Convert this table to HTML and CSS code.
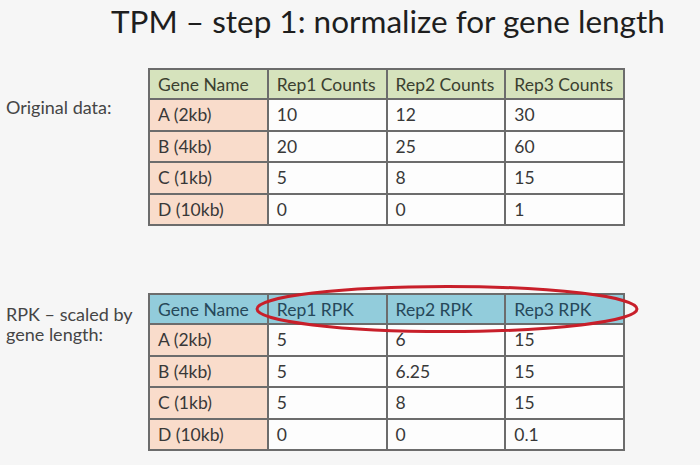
FILE: index.html
```html
<!DOCTYPE html>
<html>
<head>
<meta charset="utf-8">
<link rel="stylesheet" href="styles.css">
</head>
<body>
<div class="slide">
  <h1 class="title">TPM – step 1: normalize for gene length</h1>

  <section class="section first">
    <div class="label">Original data:</div>
    <div class="table-wrap">
      <table class="data green">
        <thead>
          <tr><th>Gene Name</th><th>Rep1 Counts</th><th>Rep2 Counts</th><th>Rep3 Counts</th></tr>
        </thead>
        <tbody>
          <tr><td>A (2kb)</td><td>10</td><td>12</td><td>30</td></tr>
          <tr><td>B (4kb)</td><td>20</td><td>25</td><td>60</td></tr>
          <tr><td>C (1kb)</td><td>5</td><td>8</td><td>15</td></tr>
          <tr><td>D (10kb)</td><td>0</td><td>0</td><td>1</td></tr>
        </tbody>
      </table>
    </div>
  </section>

  <section class="section second">
    <div class="label">RPK – scaled by<br>gene length:</div>
    <div class="table-wrap">
      <table class="data blue">
        <thead>
          <tr><th>Gene Name</th><th>Rep1 RPK</th><th>Rep2 RPK</th><th>Rep3 RPK</th></tr>
        </thead>
        <tbody>
          <tr><td>A (2kb)</td><td>5</td><td>6</td><td>15</td></tr>
          <tr><td>B (4kb)</td><td>5</td><td>6.25</td><td>15</td></tr>
          <tr><td>C (1kb)</td><td>5</td><td>8</td><td>15</td></tr>
          <tr><td>D (10kb)</td><td>0</td><td>0</td><td>0.1</td></tr>
        </tbody>
      </table>
      <svg class="ring" width="400" height="56" viewBox="0 0 400 56">
        <ellipse cx="199" cy="28" rx="190" ry="22.5" fill="none" stroke="#c81f2a" stroke-width="3"/>
      </svg>
    </div>
  </section>
</div>
</body>
</html>
```

FILE: styles.css
```css
html, body {
  margin: 0;
  padding: 0;
  background: #f6f6f6;
}

.slide {
  width: 700px;
  height: 465px;
  font-family: Lato, "Open Sans", sans-serif;
  color: #3a3a3a;
  overflow: hidden;
}

.title {
  margin: 3px 0 0 111px;
  font-size: 31.5px;
  font-weight: 400;
  line-height: 37px;
  color: #1e1e1e;
  white-space: nowrap;
}

.section {
  display: grid;
  grid-template-columns: 148px 477px;
}

.section.first {
  margin-top: 28px;
}

.section.second {
  margin-top: 67px;
}

.label {
  padding: 29px 0 0 6px;
  font-size: 18px;
  line-height: 20px;
  color: #454545;
}

.second .label {
  padding-top: 11px;
}

.table-wrap {
  position: relative;
}

.data {
  width: 477px;
  height: 158px;
  table-layout: fixed;
  border-collapse: collapse;
  font-size: 17.5px;
  color: #383838;
}

.data th,
.data td {
  border: 2px solid #6c6c6c;
  padding: 0 0 0 8px;
  text-align: left;
  font-weight: 400;
  background: #fdfdfd;
  height: 28px;
  white-space: nowrap;
}

.data td:first-child {
  background: #f9dccb;
}

.green th {
  background: #d6e3bd;
  color: #3b4030;
}

.blue th {
  background: #92ccdb;
  color: #26485a;
}

.ring {
  position: absolute;
  left: 100px;
  top: -12px;
}
```
